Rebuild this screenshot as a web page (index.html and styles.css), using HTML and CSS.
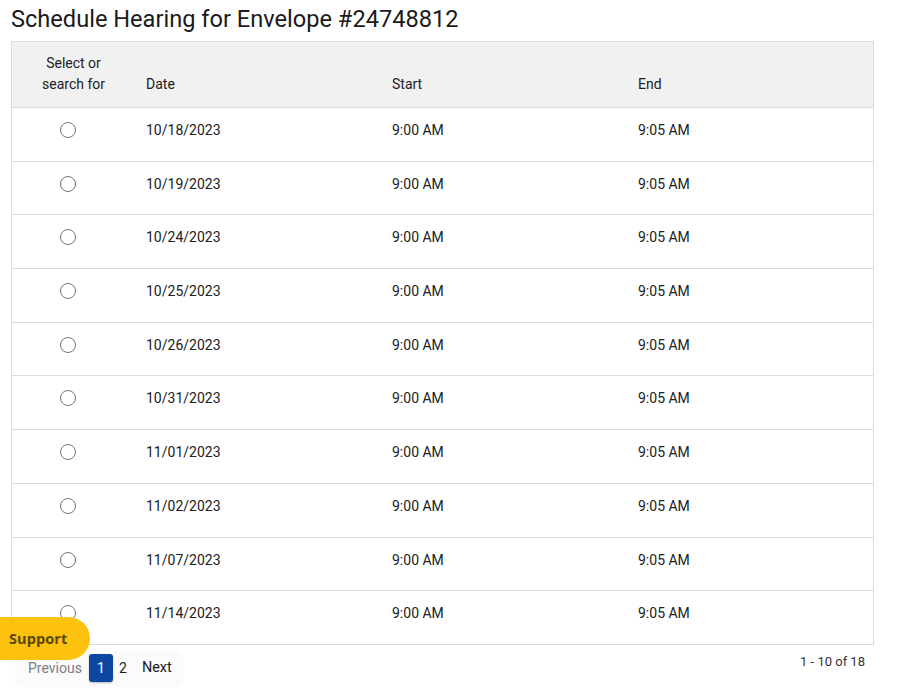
FILE: index.html
```html
<!DOCTYPE html>
<html lang="en">
<head>
    <meta charset="UTF-8">
    <meta name="viewport" content="width=device-width, initial-scale=1.0">
    <title>Schedule Hearing</title>
    <link rel="stylesheet" href="styles.css">
</head>
<body>
    <h1 class="title">Schedule Hearing for Envelope #24748812</h1>

    <table class="slots">
        <thead>
            <tr>
                <th class="col-select">Select or search for</th>
                <th>Date</th>
                <th>Start</th>
                <th>End</th>
            </tr>
        </thead>
        <tbody>
            <tr><td class="col-select"><input type="radio" name="slot"></td><td>10/18/2023</td><td>9:00 AM</td><td>9:05 AM</td></tr>
            <tr><td class="col-select"><input type="radio" name="slot"></td><td>10/19/2023</td><td>9:00 AM</td><td>9:05 AM</td></tr>
            <tr><td class="col-select"><input type="radio" name="slot"></td><td>10/24/2023</td><td>9:00 AM</td><td>9:05 AM</td></tr>
            <tr><td class="col-select"><input type="radio" name="slot"></td><td>10/25/2023</td><td>9:00 AM</td><td>9:05 AM</td></tr>
            <tr><td class="col-select"><input type="radio" name="slot"></td><td>10/26/2023</td><td>9:00 AM</td><td>9:05 AM</td></tr>
            <tr><td class="col-select"><input type="radio" name="slot"></td><td>10/31/2023</td><td>9:00 AM</td><td>9:05 AM</td></tr>
            <tr><td class="col-select"><input type="radio" name="slot"></td><td>11/01/2023</td><td>9:00 AM</td><td>9:05 AM</td></tr>
            <tr><td class="col-select"><input type="radio" name="slot"></td><td>11/02/2023</td><td>9:00 AM</td><td>9:05 AM</td></tr>
            <tr><td class="col-select"><input type="radio" name="slot"></td><td>11/07/2023</td><td>9:00 AM</td><td>9:05 AM</td></tr>
            <tr><td class="col-select"><input type="radio" name="slot"></td><td>11/14/2023</td><td>9:00 AM</td><td>9:05 AM</td></tr>
        </tbody>
    </table>

    <div class="footer">
        <div class="pager">
            <span class="pager-prev">Previous</span>
            <span class="pager-page active">1</span>
            <span class="pager-page">2</span>
            <span class="pager-next">Next</span>
        </div>
        <div class="count">1 - 10 of 18</div>
    </div>

    <button class="support-btn">Support</button>
</body>
</html>
```

FILE: styles.css
```css
body {
    margin: 0;
    padding: 0 40px 0 11px;
    font-family: Roboto, "Liberation Sans", sans-serif;
    color: #212121;
    background: white;
}
.title {
    font-size: 23.6px;
    font-weight: 400;
    margin: 5px 0 8px 0;
    line-height: 28px;
    color: #1a1a1a;
}
.slots {
    width: 861px;
    border-collapse: collapse;
    border: 1px solid #dcdcdc;
    table-layout: fixed;
    font-size: 14px;
}
.slots th, .slots td {
    text-align: left;
    padding: 12px 12px 0 11px;
    width: 223px;
}
.slots th {
    background: #f1f1f1;
    font-weight: 400;
    vertical-align: bottom;
    line-height: 21px;
    padding-top: 11px;
    padding-bottom: 12px;
    border-bottom: 1px solid #dcdcdc;
}
.slots th.col-select, .slots td.col-select {
    width: 99px;
    padding-left: 12px;
    text-align: center;
}
.slots tbody tr {
    height: 53.7px;
}
.slots td {
    vertical-align: top;
    line-height: 20px;
    border-bottom: 1px solid #dcdcdc;
}
.slots td.col-select {
    padding-top: 14px;
    padding-right: 24px;
}
.slots input[type="radio"] {
    appearance: none;
    display: block;
    box-sizing: border-box;
    width: 16px;
    height: 16px;
    margin: 0 auto;
    border: 1px solid #767676;
    border-radius: 50%;
    background: white;
    cursor: pointer;
}
.slots input[type="radio"]:checked {
    border: 5px solid #0d47a1;
}
.footer {
    width: 861px;
    display: flex;
    justify-content: space-between;
    align-items: flex-start;
}
.pager {
    display: flex;
    align-items: center;
    gap: 6px;
    margin-top: 5px;
    margin-left: 4px;
    padding: 4px 11px 5px 13px;
    background: #fbfbfb;
    border-radius: 6px;
    font-size: 14px;
}
.pager-prev {
    color: #7a7f87;
    margin-right: 1px;
}
.pager-page {
    display: inline-block;
    min-width: 24px;
    height: 28px;
    line-height: 28px;
    text-align: center;
    color: #1a1a1a;
}
.pager-page.active {
    background: #0d47a1;
    color: white;
    border-radius: 3px;
    box-shadow: 0 1px 2px rgba(0,0,0,0.25);
}
.pager-page + .pager-page {
    min-width: 8px;
    margin-right: 9px;
}
.pager-next {
    color: #1a1a1a;
    font-size: 14.4px;
}
.count {
    font-size: 13px;
    color: #333;
    margin-top: 9px;
    margin-right: 7px;
}
.support-btn {
    position: fixed;
    left: 0;
    bottom: 30px;
    width: 90px;
    height: 43px;
    padding: 0 0 0 9px;
    text-align: left;
    background: #fdc20f;
    color: #5a4600;
    border: none;
    border-radius: 0 22px 22px 0;
    font-family: "Open Sans", sans-serif;
    font-weight: 700;
    font-size: 14.5px;
    letter-spacing: 0.1px;
    cursor: pointer;
}
```
